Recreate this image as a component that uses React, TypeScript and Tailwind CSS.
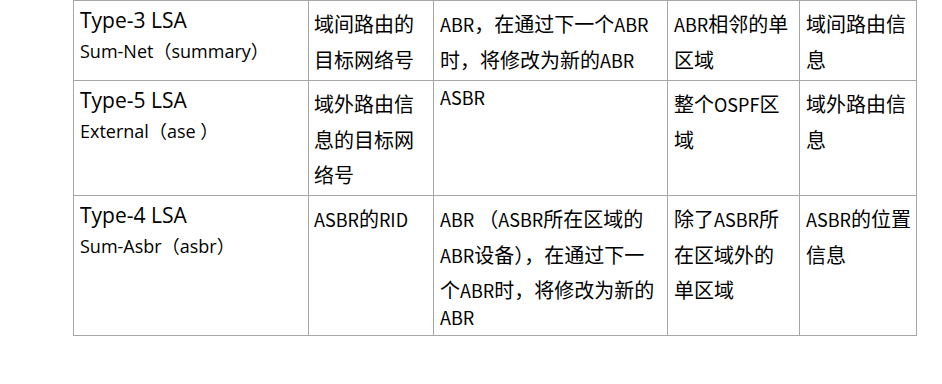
type Line = string | { text: string; latin: true };

type Row = {
  height: string;
  title: string;
  sub: string;
  cols: Line[][];
};

const rows: Row[] = [
  {
    height: "h-[80px]",
    title: "Type-3 LSA",
    sub: "Sum-Net（summary）",
    cols: [
      ["域间路由的", "目标网络号"],
      ["ABR，在通过下一个ABR", "时，将修改为新的ABR"],
      ["ABR相邻的单", "区域"],
      ["域间路由信", "息"],
    ],
  },
  {
    height: "h-[115px]",
    title: "Type-5 LSA",
    sub: "External（ase ）",
    cols: [
      ["域外路由信", "息的目标网", "络号"],
      [{ text: "ASBR", latin: true }],
      ["整个OSPF区", "域"],
      ["域外路由信", "息"],
    ],
  },
  {
    height: "h-[140px]",
    title: "Type-4 LSA",
    sub: "Sum-Asbr（asbr）",
    cols: [
      ["ASBR的RID"],
      [
        "ABR （ASBR所在区域的",
        "ABR设备），在通过下一",
        "个ABR时，将修改为新的",
        { text: "ABR", latin: true },
      ],
      ["除了ASBR所", "在区域外的", "单区域"],
      ["ASBR的位置", "信息"],
    ],
  },
];

// widths of columns 2..5 (col 1 is separate)
const colClass = [
  "w-[125px] pl-[5px]",
  "w-[234px] pl-[6px]",
  "w-[132px] pl-[6px]",
  "w-[117px] pl-[6px]",
];

// latin runs are a bit smaller than the chinese glyphs, like in the doc
function Mixed({ text }: { text: string }) {
  return (
    <>
      {text.split(/([A-Za-z ]+)/).map((part, i) =>
        /^[A-Za-z ]+$/.test(part) ? (
          <span key={i} className="text-[18px] leading-none">
            {part}
          </span>
        ) : (
          part
        )
      )}
    </>
  );
}

function TextCell({ lines, className }: { lines: Line[]; className: string }) {
  return (
    <div
      className={`shrink-0 border-r border-b border-[#a6a6a6] pt-[5px] font-['Noto_Sans_CJK_SC',sans-serif] text-[20px] text-black ${className}`}
    >
      {lines.map((line, i) =>
        typeof line === "string" ? (
          <div key={i} className="whitespace-nowrap leading-[35.5px]">
            <Mixed text={line} />
          </div>
        ) : (
          <div
            key={i}
            className={`whitespace-nowrap leading-[22px] ${i > 0 ? "-mt-[2px]" : ""}`}
          >
            <Mixed text={line.text} />
          </div>
        )
      )}
    </div>
  );
}

export default function App() {
  return (
    <div className="min-h-screen bg-white pl-[73px]">
      <div className="flex w-max flex-col border-l border-t border-[#a6a6a6]">
        {rows.map((row) => (
          <div key={row.title} className={`flex ${row.height}`}>
            <div className="w-[235px] shrink-0 border-r border-b border-[#a6a6a6] pl-[6px] pt-[4px] font-['Open_Sans','Noto_Sans_CJK_SC',sans-serif] text-black">
              <div className="whitespace-nowrap text-[21px] leading-[30px]">{row.title}</div>
              <div className="whitespace-nowrap text-[18px] leading-[32.5px]">{row.sub}</div>
            </div>
            {row.cols.map((lines, i) => (
              <TextCell key={i} lines={lines} className={colClass[i]} />
            ))}
          </div>
        ))}
      </div>
    </div>
  );
}
